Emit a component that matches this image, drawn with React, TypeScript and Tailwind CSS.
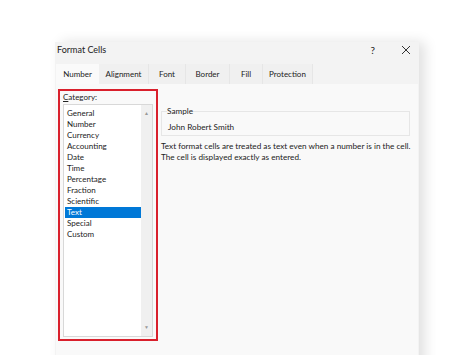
import React from "react";

const categories = [
    "General",
    "Number",
    "Currency",
    "Accounting",
    "Date",
    "Time",
    "Percentage",
    "Fraction",
    "Scientific",
    "Text",
    "Special",
    "Custom",
];

const tabs = [
    { label: "Number", w: "w-[43px]" },
    { label: "Alignment", w: "w-[50px]" },
    { label: "Font", w: "w-[37px]" },
    { label: "Border", w: "w-[44px]" },
    { label: "Fill", w: "w-[33px]" },
    { label: "Protection", w: "w-[50px]" },
];

export default function App() {
    return (
        <div className="h-[355px] w-[474px] overflow-hidden bg-white pl-[55px] pt-[42px] font-['Lato',sans-serif] text-[#222]">
            <div className="flex h-[330px] w-[364px] flex-col bg-[#f3f3f3] shadow-[6px_0_12px_rgba(0,0,0,0.12)]">
                {/* title bar */}
                <div className="flex h-[16px] items-center pl-[2px] pr-[8px] text-[9px]">
                    <span>Format Cells</span>
                    <span className="ml-auto mr-[26px] text-[10px]">?</span>
                    <svg width="10" height="10" viewBox="0 0 10 10" className="text-[#333]">
                        <path d="M1 1L9 9M9 1L1 9" stroke="currentColor" strokeWidth="1" />
                    </svg>
                </div>

                {/* tabs */}
                <div className="mt-[6px] flex h-[20px] pl-[1px] text-[8px]">
                    {tabs.map((t, i) => (
                        <div
                            key={t.label}
                            className={`flex items-center justify-center ${t.w} ${
                                i === 0 ? "bg-[#fafafa]" : "border-r border-[#e6e6e6] bg-[#f0f0f0]"
                            }`}
                        >
                            {t.label}
                        </div>
                    ))}
                </div>

                {/* content */}
                <div className="mx-[1px] flex flex-1 bg-[#f9f9f9] pl-[2px] pt-[5px]">
                    <div className="flex h-[252px] w-[100px] shrink-0 flex-col border-2 border-[#d9202c] px-[3px] pb-[2px]">
                        <div className="h-[13px] text-[8px] leading-[12px]">
                            <span className="underline">C</span>ategory:
                        </div>
                        <div className="flex flex-1 border border-[#d8d8d8] bg-white">
                            <div className="flex-1 pl-[1px] pt-[3px] text-[8px] leading-[11px]">
                                {categories.map(c => (
                                    <div
                                        key={c}
                                        className={`pl-[2px] ${c === "Text" ? "bg-[#0078d7] text-white" : ""}`}
                                    >
                                        {c}
                                    </div>
                                ))}
                            </div>
                            <div className="flex w-[11px] flex-col items-center justify-between bg-[#f0f0f0] py-[5px] text-[5px] text-[#999]">
                                <span>▲</span>
                                <span>▼</span>
                            </div>
                        </div>
                    </div>

                    <div className="ml-[3px] flex-1 pr-[8px] pt-[17px] text-[8.2px]">
                        <fieldset className="h-[30px] border border-[#e6e6e6] px-[5px]">
                            <legend className="px-0 leading-[11px]">Sample</legend>
                            <div className="mt-[5px] pl-[1px] leading-[11px]">John Robert Smith</div>
                        </fieldset>
                        <div className="mt-[5px] whitespace-nowrap leading-[11px]">
                            Text format cells are treated as text even when a number is in the cell.
                            <br />
                            The cell is displayed exactly as entered.
                        </div>
                    </div>
                </div>
            </div>
        </div>
    );
}
